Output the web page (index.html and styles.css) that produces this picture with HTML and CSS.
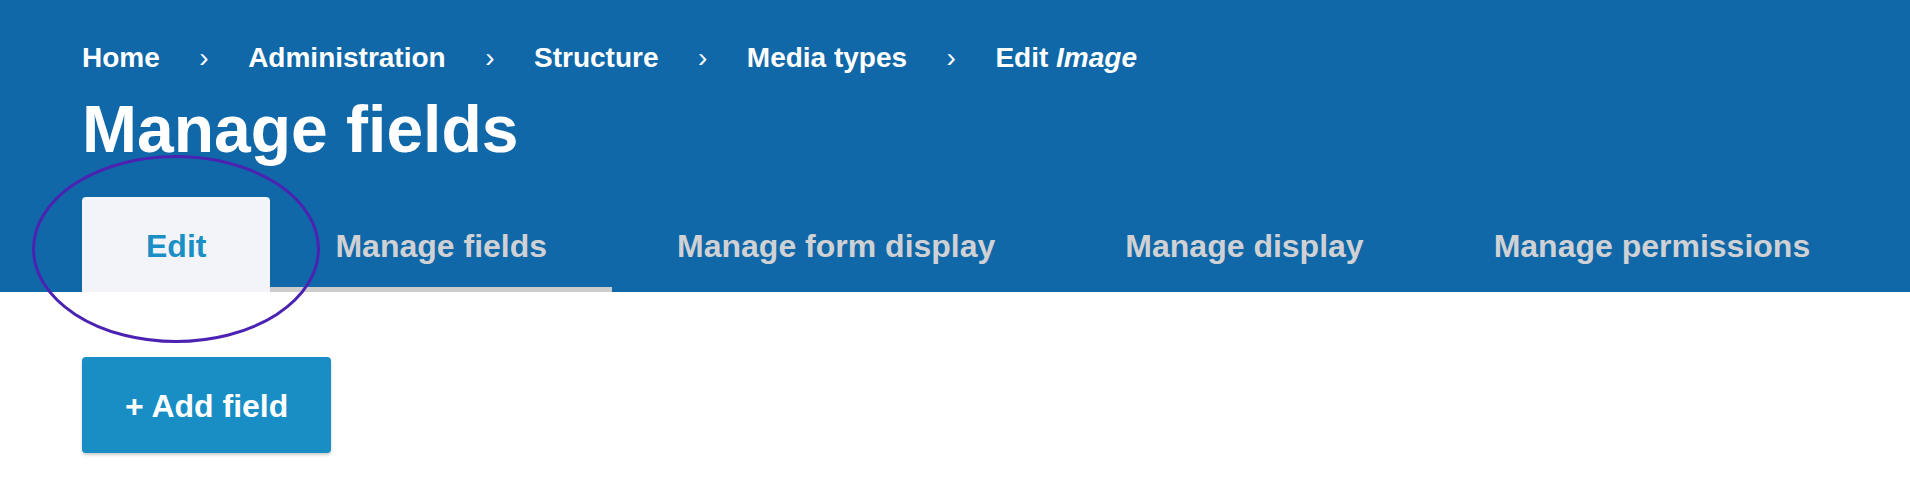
FILE: index.html
```html
<!DOCTYPE html>
<html lang="en">
  <head>
    <meta charset="UTF-8" />
    <meta name="viewport" content="width=device-width, initial-scale=1.0" />
    <title>Manage fields | Image</title>
    <link rel="stylesheet" href="styles.css">
  </head>
  <body>
    <header class="page-header">
      <nav class="breadcrumb">
        <a href="#">Home</a>
        <span class="sep">›</span>
        <a href="#">Administration</a>
        <span class="sep">›</span>
        <a href="#">Structure</a>
        <span class="sep">›</span>
        <a href="#">Media types</a>
        <span class="sep">›</span>
        <a href="#">Edit <em>Image</em></a>
      </nav>

      <h1 class="page-title">Manage fields</h1>

      <ul class="tabs">
        <li class="tab active"><a href="#">Edit</a></li>
        <li class="tab hover"><a href="#">Manage fields</a></li>
        <li class="tab"><a href="#">Manage form display</a></li>
        <li class="tab"><a href="#">Manage display</a></li>
        <li class="tab"><a href="#">Manage permissions</a></li>
      </ul>
    </header>

    <main class="content">
      <a href="#" class="button">+ Add field</a>
    </main>

    <!-- annotation circle drawn over the Edit tab -->
    <svg class="highlight" width="290" height="192" viewBox="0 0 290 192">
      <ellipse cx="144" cy="95" rx="142.5" ry="92.5" fill="none" stroke="#4b22b1" stroke-width="3" />
    </svg>
  </body>
</html>
```

FILE: styles.css
```css
* {
  margin: 0;
  padding: 0;
  box-sizing: border-box;
  font-family: "Liberation Sans", Arial, Helvetica, sans-serif;
}
body {
  background-color: #fff;
  color: #222;
  position: relative;
  min-height: 100vh;
}
a {
  text-decoration: none;
  color: inherit;
}
.page-header {
  background-color: #1068a8;
  color: #fff;
  padding: 41px 82px 0;
}
.breadcrumb {
  display: flex;
  align-items: baseline;
  font-size: 28px;
  line-height: 34px;
  font-weight: bold;
  white-space: nowrap;
}
.breadcrumb em {
  font-style: italic;
}
.breadcrumb .sep {
  font-weight: normal;
  margin: 0 39.5px;
}
.page-title {
  font-size: 66px;
  line-height: 80px;
  font-weight: bold;
  margin-top: 14px;
}
.tabs {
  list-style: none;
  display: flex;
  margin-top: 28px;
}
.tab a {
  display: block;
  padding: 30px 65px 22px;
  border-bottom: 5px solid transparent;
  font-size: 32px;
  line-height: 38px;
  font-weight: bold;
  color: #d0d1d4;
  white-space: nowrap;
}
.tab.active a {
  padding-left: 64px;
  padding-right: 64px;
  background-color: #f3f4f9;
  color: #1a8fc6;
  border-radius: 4px 4px 0 0;
}
.tab.hover a {
  border-bottom-color: #cccccc;
}
.content {
  padding: 65px 82px;
}
.button {
  display: inline-block;
  background-color: #188ec5;
  color: #fff;
  font-size: 32px;
  line-height: 36px;
  font-weight: bold;
  padding: 31px 43px 29px;
  border-radius: 4px;
  box-shadow: 0 2px 3px rgba(0, 0, 0, 0.2);
}
.highlight {
  position: absolute;
  left: 32px;
  top: 154px;
}
```
